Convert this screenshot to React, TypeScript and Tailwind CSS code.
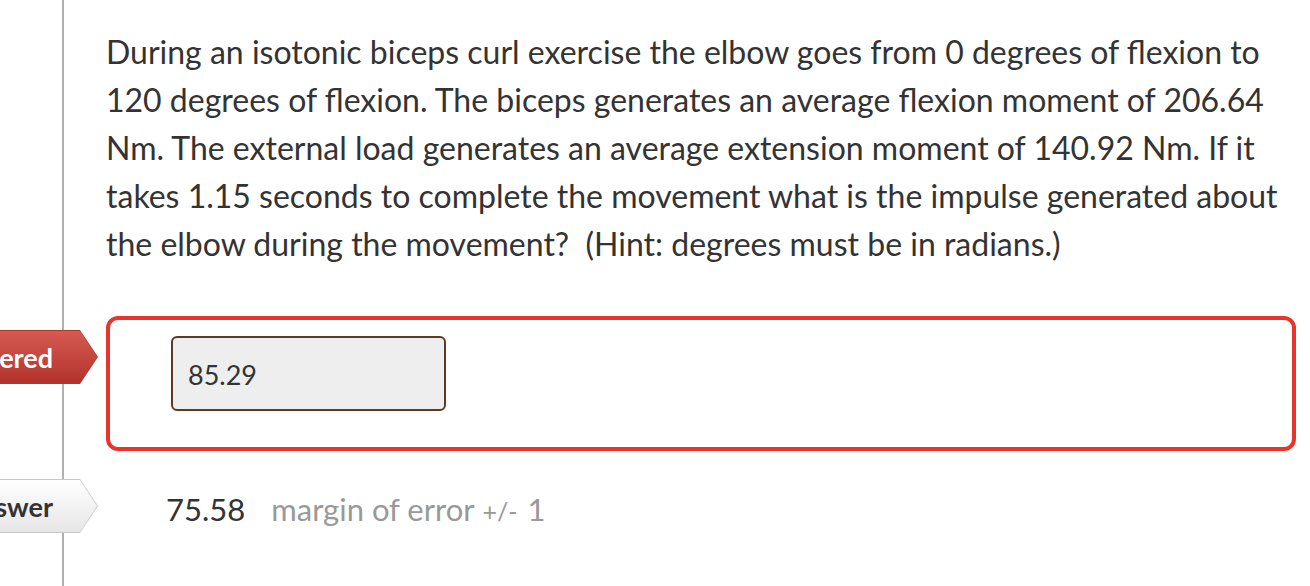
import React from "react";

function Arrow({
  text,
  top,
  outer,
  inner,
  textClass,
}: {
  text: string;
  top: string;
  outer: string;
  inner: string;
  textClass: string;
}) {
  return (
    <div
      className={`absolute left-[-200px] h-[54px] w-[298px] ${top} ${outer} [clip-path:polygon(0_0,280px_0,298px_50%,280px_100%,0_100%)]`}
    >
      <div
        className={`absolute inset-[1px] ${inner} [clip-path:polygon(0_0,279px_0,296px_50%,279px_100%,0_100%)] flex items-center justify-end pr-[44px]`}
      >
        <span className={`text-[27px] font-bold leading-none ${textClass}`}>{text}</span>
      </div>
    </div>
  );
}

export default function App() {
  return (
    <div className="relative h-[586px] w-[1310px] overflow-hidden bg-white font-['Lato','Noto_Sans',sans-serif] text-[#333]">
      <div className="absolute left-[62px] top-0 h-full w-[2px] bg-[#b0b0b0]" />
      <Arrow
        text="You Answered"
        top="top-[330px]"
        outer="bg-[#a83a32]"
        inner="bg-gradient-to-b from-[#d65a52] to-[#b3322b]"
        textClass="text-white"
      />
      <Arrow
        text="Correct Answer"
        top="top-[479px]"
        outer="bg-[#c8c8c8]"
        inner="bg-gradient-to-b from-[#ffffff] to-[#e6e6e6]"
        textClass="text-[#333]"
      />
      <div className="pl-[106px] pt-[28px]">
        <p className="w-[1190px] text-[32px] leading-[48px]">
          During an isotonic biceps curl exercise the elbow goes from 0 degrees of flexion to 120 degrees of
          flexion. The biceps generates an average flexion moment of 206.64 Nm. The external load generates an
          average extension moment of 140.92 Nm. If it takes 1.15 seconds to complete the movement what is the
          impulse generated about the elbow during the movement?&nbsp; (Hint: degrees must be in radians.)
        </p>
        <div className="mt-[48px] h-[135px] w-[1190px] rounded-[12px] border-[4px] border-[#e8342a] pl-[61px] pt-[16px]">
          <div className="flex h-[75px] w-[275px] items-center rounded-[6px] border-2 border-[#5c3a26] bg-[#eeeeee] pl-[15px] pt-[4px] text-[27px]">
            85.29
          </div>
        </div>
        <div className="mt-[35px] flex items-baseline pl-[60px]">
          <span className="text-[31px] text-[#333]">75.58</span>
          <span className="ml-[26px] text-[31px] text-[#999]">margin of error</span>
          <span className="ml-[8px] text-[25px] text-[#999]">+/-</span>
          <span className="ml-[10px] text-[31px] text-[#999]">1</span>
        </div>
      </div>
    </div>
  );
}
